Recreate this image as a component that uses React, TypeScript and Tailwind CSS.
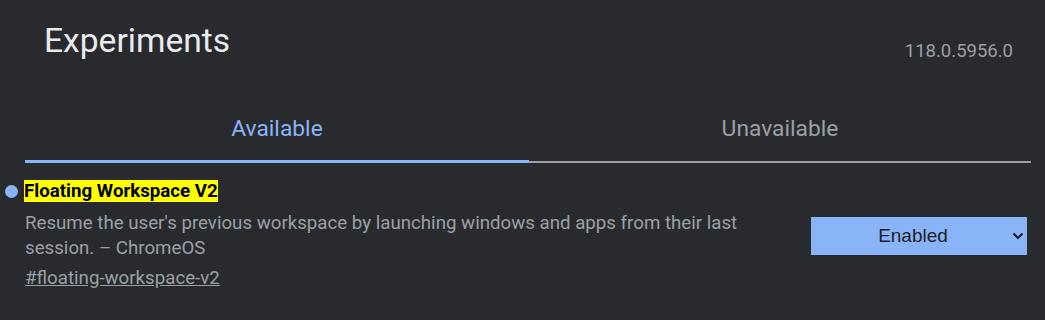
import React from "react";

export default function App() {
  return (
    <div className="w-[1045px] h-[320px] bg-[#292a2d] font-['Roboto',sans-serif] overflow-hidden">
      <div className="flex justify-between items-start pl-[44px] pr-[32px] pt-[24px] h-[117px]">
        <h1 className="text-[33.6px] leading-[33.6px] text-[#e8eaed] font-normal">Experiments</h1>
        <div className="text-[18.5px] leading-[18.5px] text-[#9aa0a6] mt-[18px]">118.0.5956.0</div>
      </div>
      <div className="flex items-end ml-[25px] w-[1006px]">
        <div className="w-[504px] text-center text-[22.8px] leading-[23px] text-[#8ab4f8] pb-[20px] border-b-[3px] border-[#8ab4f8]">
          Available
        </div>
        <div className="flex-1 text-center text-[22.8px] leading-[23px] text-[#9aa0a6] pb-[21px] border-b-2 border-[#9aa0a6]">
          Unavailable
        </div>
      </div>
      <div className="flex items-center pl-[25px] pr-[18px] mt-[17px]">
        <div className="flex-1">
          <div className="flex items-center h-[22px]">
            <span className="w-[13px] h-[13px] rounded-full bg-[#8ab4f8] ml-[-20px] mr-[6px] shrink-0"></span>
            <span className="bg-[#ffff00] text-black font-bold text-[18.7px] leading-[22px]">Floating Workspace V2</span>
          </div>
          <p className="text-[18.7px] leading-[25px] text-[#9aa0a6] w-[745px] mt-[8.5px]">
            Resume the user's previous workspace by launching windows and apps from their last session. – ChromeOS
          </p>
          <a className="block text-[18.7px] leading-[25px] text-[#9aa0a6] underline mt-[5.3px]">#floating-workspace-v2</a>
        </div>
        <div className="relative w-[216px] h-[38px] mt-[2px] bg-[#8ab4f8] flex items-center justify-center pr-[12px] font-['Liberation_Sans',Arial,sans-serif] text-[19px] text-[#202124]">
          Enabled
          <svg className="absolute right-[3px] top-[15px]" width="12" height="8" viewBox="0 0 12 8">
            <polyline points="1.5,1.5 6,6 10.5,1.5" fill="none" stroke="#202124" strokeWidth="2.2" />
          </svg>
        </div>
      </div>
    </div>
  );
}
